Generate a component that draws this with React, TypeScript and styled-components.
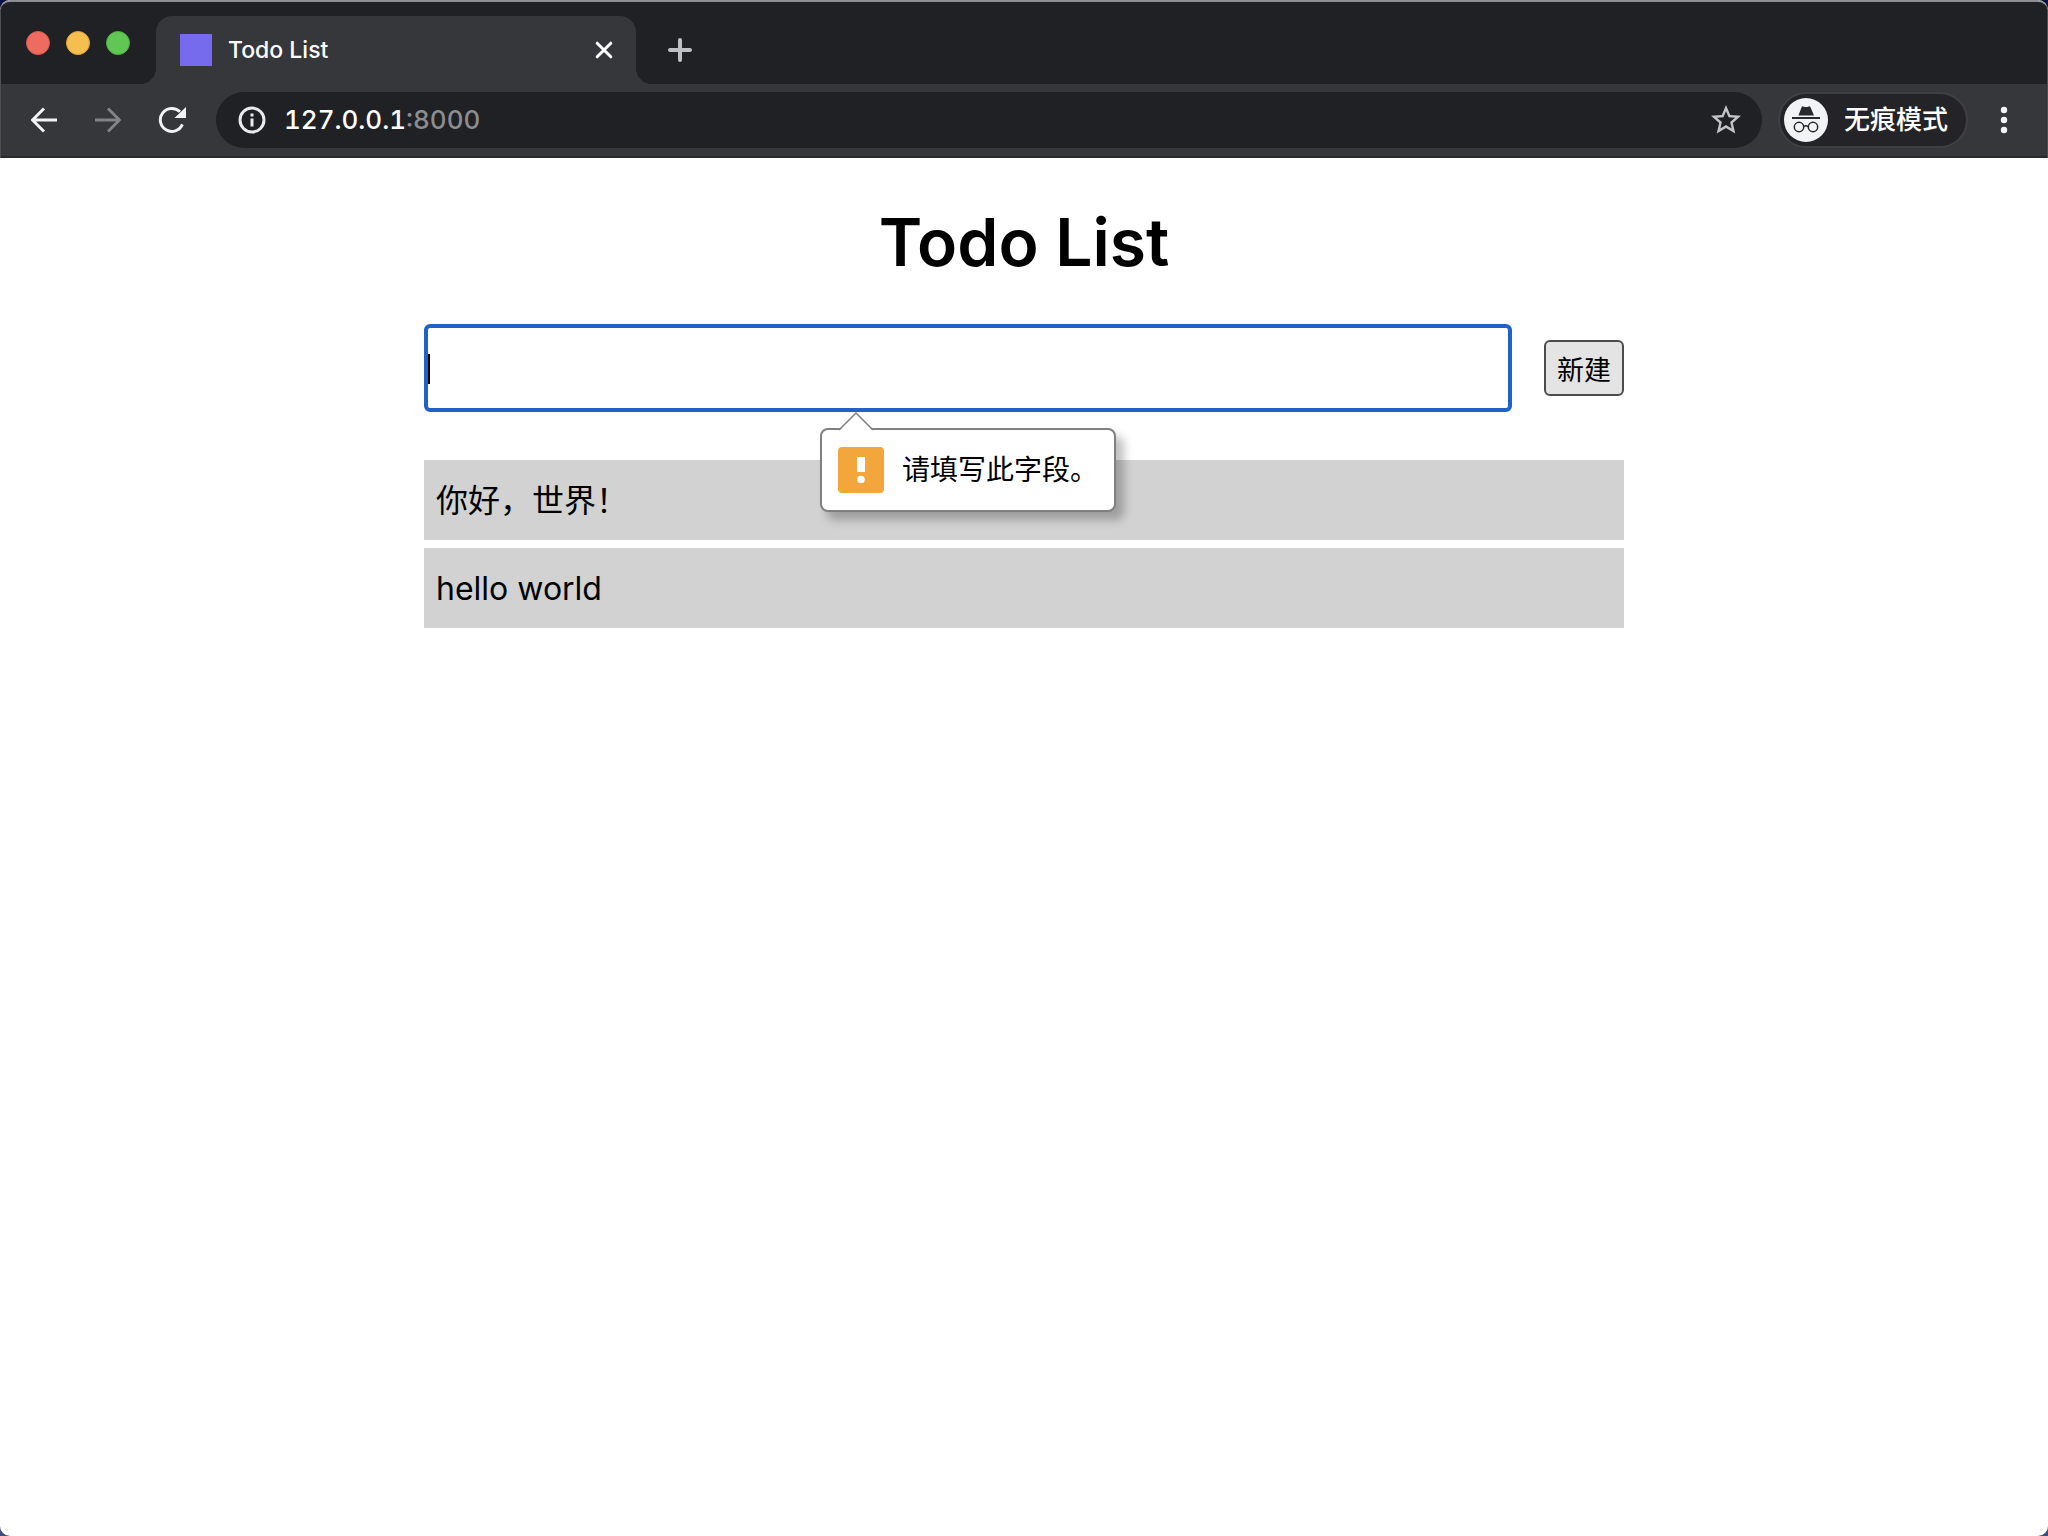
import React, { useState } from "react";
import styled, { createGlobalStyle } from "styled-components";

const ui = `"Inter", "Noto Sans CJK SC", sans-serif`;
const frame = "#202124";
const bar = "#36373b";

const GlobalStyle = createGlobalStyle`
  *, *::before, *::after { box-sizing: border-box; }
  body {
    margin: 0;
    background: linear-gradient(#0e1040, #414b7c);
    font-family: ${ui};
  }
  button { font-family: inherit; cursor: pointer; }
`;

const Window = styled.div`
  display: flex;
  flex-direction: column;
  min-height: 100vh;
  overflow: hidden;
  border-radius: 10px;
  background: #fff;
`;

const Chrome = styled.header`
  background: ${frame};
  border: 1px solid #4d4e52;
  border-top: 2px solid #8e8f91;
  border-bottom: 0;
  border-radius: 10px 10px 0 0;
`;

const TabStrip = styled.div`
  display: flex;
  align-items: flex-end;
  height: 82px;
`;

const Lights = styled.div`
  display: flex;
  align-self: center;
  gap: 16px;
  padding: 0 26px 0 25px;
`;

const Light = styled.button<{ $color: string; $edge: string }>`
  width: 24px;
  height: 24px;
  padding: 0;
  border: 1px solid ${(p) => p.$edge};
  border-radius: 50%;
  background: ${(p) => p.$color};
`;

const Tab = styled.div`
  position: relative;
  display: flex;
  align-items: center;
  width: 480px;
  height: 68px;
  padding: 0 20px 0 24px;
  border-radius: 16px 16px 0 0;
  background: ${bar};
  color: #fff;

  &::before,
  &::after {
    content: "";
    position: absolute;
    bottom: 0;
    width: 16px;
    height: 16px;
  }
  &::before {
    right: 100%;
    background: radial-gradient(circle at 0 0, transparent 16px, ${bar} 16px);
  }
  &::after {
    left: 100%;
    background: radial-gradient(circle at 100% 0, transparent 16px, ${bar} 16px);
  }
`;

const Favicon = styled.span`
  width: 32px;
  height: 32px;
  margin-right: 16px;
  background: #766bed;
`;

const TabTitle = styled.span`
  flex: 1;
  font-size: 23px;
  line-height: 32px;
  font-weight: 500;
`;

const IconButton = styled.button<{ $w?: number; $color?: string }>`
  display: flex;
  align-items: center;
  justify-content: center;
  flex: none;
  width: ${(p) => p.$w ?? 64}px;
  height: 56px;
  padding: 0;
  border: 0;
  background: none;
  color: ${(p) => p.$color ?? "#f1f3f4"};
`;

const NewTabSlot = styled.div`
  display: flex;
  align-items: center;
  height: 68px;
  margin-left: 16px;
`;

const Toolbar = styled.div`
  display: flex;
  align-items: center;
  padding: 8px 11px;
  border-bottom: 2px solid #28292c;
  background: ${bar};
`;

const AddressBar = styled.div`
  display: flex;
  align-items: center;
  flex: 1;
  height: 56px;
  margin: 0 16px 0 12px;
  padding: 0 4px 0 8px;
  border-radius: 28px;
  background: ${frame};
`;

const Url = styled.div`
  flex: 1;
  padding-left: 4px;
  color: #fff;
  font-size: 26px;
  line-height: 40px;
  font-weight: 500;
  font-variant-numeric: tabular-nums;
  white-space: nowrap;
  outline: none;
`;

const Port = styled.span`
  color: #8c8d8f;
`;

const Incognito = styled.button`
  display: flex;
  align-items: center;
  flex: none;
  gap: 16px;
  height: 56px;
  margin-right: 4px;
  padding: 0 18px 0 4px;
  border: 2px solid #3f4045;
  border-radius: 28px;
  background: #242428;
  color: #fff;
  font-size: 26px;
  line-height: 36px;
  font-weight: 500;
`;

const Page = styled.main`
  width: 100%;
  max-width: 1200px;
  margin: 0 auto;
  padding: 40px 0;
  color: #000;
`;

const Title = styled.h1`
  margin: 0 0 38px;
  font-size: 66px;
  line-height: 88px;
  font-weight: 600;
  text-align: center;
`;

const Form = styled.form`
  display: flex;
  align-items: center;
  gap: 32px;
`;

const Field = styled.div`
  position: relative;
  flex: 1;
`;

const TextBox = styled.input`
  display: block;
  width: 100%;
  height: 88px;
  padding: 0;
  border: 4px solid #2162c9;
  border-radius: 6px;
  outline: none;
  background: #fff;
  caret-color: transparent;
  font: 32px/44px ${ui};
`;

const Caret = styled.span`
  position: absolute;
  top: 30px;
  left: 4px;
  width: 2px;
  height: 30px;
  background: #000;
`;

const Bubble = styled.div`
  position: absolute;
  top: 104px;
  left: 50%;
  display: flex;
  align-items: center;
  gap: 18px;
  height: 84px;
  padding: 0 16px;
  border: 2px solid #808080;
  border-radius: 8px;
  background: #fff;
  box-shadow: 8px 8px 10px rgba(0, 0, 0, 0.25);
  transform: translateX(-50%);
  font-size: 28px;
  line-height: 40px;
  white-space: nowrap;
`;

const Pointer = styled.svg`
  position: absolute;
  top: -18px;
  left: 16px;
`;

const CreateButton = styled.button`
  height: 56px;
  padding: 6px 11px 0;
  border: 2px solid #4c4c4c;
  border-radius: 6px;
  background: #e4e4e4;
  color: #000;
  font-size: 27px;
  line-height: 40px;
`;

const List = styled.ul`
  display: flex;
  flex-direction: column;
  gap: 8px;
  margin: 48px 0 0;
  padding: 0;
  list-style: none;
`;

const Item = styled.li`
  padding: 19px 12px 17px;
  background: #d2d2d2;
  font-size: 32px;
  line-height: 44px;
`;

const Arrow = ({ flip = false }: { flip?: boolean }) => (
  <svg width="26" height="26" viewBox="0 0 26 26" fill="none" stroke="currentColor" strokeWidth="3">
    <path d={flip ? "M0 13H24M13 1.5L24.5 13L13 24.5" : "M26 13H2M13 1.5L1.5 13L13 24.5"} />
  </svg>
);

const Reload = () => (
  <svg width="28" height="28" viewBox="0 0 28 28">
    <path d="M24.4 18.4A11.5 11.5 0 1 1 22 5.8" fill="none" stroke="currentColor" strokeWidth="3" />
    <path d="M28 1V12H16.5Z" fill="currentColor" />
  </svg>
);

const Info = () => (
  <svg width="28" height="28" viewBox="0 0 28 28" fill="currentColor">
    <circle cx="14" cy="14" r="12" fill="none" stroke="currentColor" strokeWidth="3" />
    <path d="M12.5 7.5h3v3h-3zM12.5 12.5h3v8h-3z" />
  </svg>
);

const Star = () => (
  <svg width="36" height="36" viewBox="0 0 24 24" fill="currentColor">
    <path d="M22 9.24l-7.19-.62L12 2 9.19 8.63 2 9.24l5.46 4.73L5.82 21 12 17.27 18.18 21l-1.63-7.03L22 9.24zM12 15.4l-3.76 2.27 1-4.28-3.32-2.88 4.38-.38L12 6.1l1.71 4.04 4.38.38-3.32 2.88 1 4.28L12 15.4z" />
  </svg>
);

const Spy = () => (
  <svg width="44" height="44" viewBox="0 0 44 44">
    <circle cx="22" cy="22" r="22" fill="#f1f3f4" />
    <path
      d="M17.6 9.2Q18 8 19.3 8.4Q22 9.4 24.7 8.4Q26 8 26.5 9.2L30 17.5H14.4Z"
      fill="#28292c"
    />
    <path d="M8 20H36" stroke="#28292c" strokeWidth="2" />
    <g fill="none" stroke="#28292c" strokeWidth="1.5">
      <circle cx="15" cy="29" r="4.7" />
      <circle cx="29" cy="29" r="4.7" />
      <path d="M19.7 28.6Q22 27 24.3 28.6" />
    </g>
  </svg>
);

const Dots = () => (
  <svg width="8" height="28" viewBox="0 0 8 28" fill="currentColor">
    <circle cx="4" cy="4" r="3.2" />
    <circle cx="4" cy="14" r="3.2" />
    <circle cx="4" cy="24" r="3.2" />
  </svg>
);

const Warning = () => (
  <svg width="46" height="46" viewBox="0 0 46 46">
    <rect width="46" height="46" rx="4" fill="#f2a63c" />
    <rect x="19" y="10" width="8" height="15" fill="#fff" />
    <circle cx="23" cy="32.5" r="3.8" fill="#fff" />
  </svg>
);

export default function App() {
  const [todos, setTodos] = useState(["你好，世界！", "hello world"]);
  const [text, setText] = useState("");

  const add = (e: React.FormEvent) => {
    e.preventDefault();
    if (!text) return;
    setTodos([...todos, text]);
    setText("");
  };

  return (
    <>
      <GlobalStyle />
      <Window>
        <Chrome>
          <TabStrip>
            <Lights>
              <Light aria-label="关闭" $color="#ed6b60" $edge="#d9574c" />
              <Light aria-label="最小化" $color="#f5bf4f" $edge="#dba53b" />
              <Light aria-label="缩放" $color="#62c655" $edge="#4fae42" />
            </Lights>
            <Tab>
              <Favicon />
              <TabTitle>Todo List</TabTitle>
              <IconButton $w={24} $color="#fff" aria-label="关闭标签页">
                <svg width="18" height="18" viewBox="0 0 18 18" stroke="currentColor" strokeWidth="3" strokeLinecap="round">
                  <path d="M2.2 2.2L15.8 15.8M15.8 2.2L2.2 15.8" />
                </svg>
              </IconButton>
            </Tab>
            <NewTabSlot>
              <IconButton $w={56} $color="#bdc1c6" aria-label="新标签页">
                <svg width="24" height="24" viewBox="0 0 24 24" stroke="currentColor" strokeWidth="4" strokeLinecap="round">
                  <path d="M12 2V22M2 12H22" />
                </svg>
              </IconButton>
            </NewTabSlot>
          </TabStrip>
          <Toolbar>
            <IconButton aria-label="后退"><Arrow /></IconButton>
            <IconButton aria-label="前进" $color="#828386"><Arrow flip /></IconButton>
            <IconButton aria-label="重新加载"><Reload /></IconButton>
            <AddressBar>
              <IconButton $w={56} $color="#e8eaed" aria-label="网站信息"><Info /></IconButton>
              <Url role="textbox" aria-label="地址" tabIndex={0}>
                127.0.0.1<Port>:8000</Port>
              </Url>
              <IconButton $color="#c3c4c5" aria-label="收藏"><Star /></IconButton>
            </AddressBar>
            <Incognito>
              <Spy />
              无痕模式
            </Incognito>
            <IconButton aria-label="菜单"><Dots /></IconButton>
          </Toolbar>
        </Chrome>
        <Page>
          <Title>Todo List</Title>
          <Form onSubmit={add} noValidate>
            <Field>
              <TextBox
                aria-label="Todo"
                required
                value={text}
                onChange={(e) => setText(e.target.value)}
              />
              {!text && <Caret />}
              {!text && (
                <Bubble role="alert">
                  <Pointer width="36" height="20" viewBox="0 0 36 20">
                    <path d="M2 18L18 2L34 18V20H2Z" fill="#fff" />
                    <path d="M1 18L18 1L35 18" fill="none" stroke="#808080" strokeWidth="1.5" />
                  </Pointer>
                  <Warning />
                  请填写此字段。
                </Bubble>
              )}
            </Field>
            <CreateButton type="submit">新建</CreateButton>
          </Form>
          <List>
            {todos.map((todo, i) => (
              <Item key={i}>{todo}</Item>
            ))}
          </List>
        </Page>
      </Window>
    </>
  );
}
